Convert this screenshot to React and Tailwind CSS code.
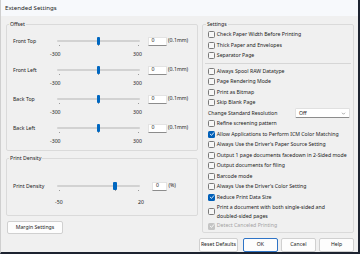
import React from 'react';

const Check = ({ checked = false, disabled = false }) => {
  if (checked) {
    return (
      <span
        className={`flex items-center justify-center w-[7px] h-[7px] shrink-0 rounded-[1.5px] ${
          disabled ? 'bg-[#c4c4c4]' : 'bg-[#005fb8]'
        }`}
      >
        <svg viewBox="0 0 10 10" className="w-[6px] h-[6px]">
          <path d="M2 5.2 L4.2 7.3 L8 2.8" fill="none" stroke="white" strokeWidth="1.4" strokeLinecap="round" strokeLinejoin="round" />
        </svg>
      </span>
    );
  }
  return <span className="block w-[7px] h-[7px] shrink-0 rounded-[1.5px] border border-[#7a7a7a] bg-[#f7f7f7]" />;
};

const Slider = ({ thumb, ticks }) => (
  <div className="relative w-[83px] h-[10px] shrink-0">
    <div className="absolute left-0 right-0 top-[3.5px] h-[2px] rounded-full bg-[#d2d2d2]" />
    <div className="absolute top-[1px] w-[3.5px] h-[7.5px] rounded-[1px] bg-[#0067c0]" style={{ left: thumb - 1.75 }} />
    {ticks.map((t) => (
      <div key={t} className="absolute top-[9px] w-[1px] h-[1px] bg-[#9a9a9a]" style={{ left: t }} />
    ))}
  </div>
);

const NumBox = ({ className }) => (
  <div className={`h-[9px] bg-white border border-[#e3e3e3] border-b-[#8c8c8c] flex items-center pl-[3px] ${className}`}>
    0
  </div>
);

const OffsetRow = ({ label }) => (
  <div className="mb-[5px]">
    <div className="flex items-center h-[10px]">
      <span className="w-[44px] pt-[2px]">{label}</span>
      <Slider thumb={41.3} ticks={[2, 41, 81]} />
      <NumBox className="ml-[7.5px] w-[19px]" />
      <span className="ml-[1.5px]">(0.1mm)</span>
    </div>
    <div className="flex items-center h-[10px] mt-[4px]">
      <span className="ml-[37px] w-[83px]">-300</span>
      <span>300</span>
    </div>
  </div>
);

const settingsTop = [
  { text: 'Check Paper Width Before Printing' },
  { text: 'Thick Paper and Envelopes' },
  { text: 'Separator Page' },
];

const settingsMid = [
  { text: 'Always Spool RAW Datatype' },
  { text: 'Page Rendering Mode' },
  { text: 'Print as Bitmap' },
  { text: 'Skip Blank Page' },
];

const settingsBottom = [
  { text: 'Refine screening pattern' },
  { text: 'Allow Applications to Perform ICM Color Matching', checked: true },
  { text: "Always Use the Driver's Paper Source Setting" },
  { text: 'Output 1 page documents facedown in 2-Sided mode' },
  { text: 'Output documents for filing' },
  { text: 'Barcode mode' },
  { text: "Always Use the Driver's Color Setting" },
  { text: 'Reduce Print Data Size', checked: true },
];

const CheckRow = ({ text, checked }) => (
  <div className="flex items-center h-[10.5px] gap-[1.8px]">
    <Check checked={checked} />
    <span>{text}</span>
  </div>
);

const Button = ({ children, className = '' }) => (
  <button
    type="button"
    className={`h-full flex items-center justify-center rounded-[2px] border bg-[#fdfdfd] ${className}`}
  >
    {children}
  </button>
);

export default function App() {
  return (
    <div className="w-[360px] h-[254px] overflow-hidden whitespace-nowrap bg-[#f0f0f0] border-l border-l-[#cfcfcf] border-r-2 border-b-2 border-r-[#1d2330] border-b-[#1d2330] flex flex-col font-['Noto_Sans',sans-serif] text-[5.2px] leading-none text-[#1b1b1b]">
      {/* Title bar */}
      <div className="h-[16px] shrink-0 flex items-center pl-[4px] bg-[#f7f9fc] text-[6.1px] text-[#202020]">
        Extended Settings
      </div>

      <div className="flex pt-[4px] pl-[5px]">
        {/* Left column */}
        <div className="w-[192px] flex flex-col">
          <fieldset className="h-[131px] border border-[#dadada] rounded-[2px] pt-[8px]">
            <legend className="ml-[2px] px-[1px] h-[8px] leading-[8px]">Offset</legend>
            <div className="pl-[6px]">
              <OffsetRow label="Front Top" />
              <OffsetRow label="Front Left" />
              <OffsetRow label="Back Top" />
              <OffsetRow label="Back Left" />
            </div>
          </fieldset>

          <fieldset className="h-[62px] mt-[3px] border border-[#dadada] rounded-[2px] pt-[19px]">
            <legend className="ml-[2px] px-[1px] h-[8px] leading-[8px]">Print Density</legend>
            <div className="pl-[6px]">
              <div className="flex items-center h-[10px]">
                <span className="w-[44px] pt-[2px]">Print Density</span>
                <Slider thumb={58} ticks={[2, 58, 81]} />
                <NumBox className="ml-[12px] w-[15px]" />
                <span className="ml-[1.5px]">(%)</span>
              </div>
              <div className="flex items-center h-[10px] mt-[7px]">
                <span className="ml-[42px] w-[83px]">-50</span>
                <span>20</span>
              </div>
            </div>
          </fieldset>

          <div className="h-[13px] mt-[5px] ml-[1px]">
            <Button className="w-[56px] border-[#d0d0d0]">Margin Settings</Button>
          </div>
        </div>

        {/* Right column */}
        <div className="w-[152px] ml-[4px] flex flex-col">
          <fieldset className="h-[213px] border border-[#dadada] rounded-[2px] pt-[1.5px] pl-[5px]">
            <legend className="-ml-[2px] px-[1px] h-[8px] leading-[8px]">Settings</legend>
            {settingsTop.map((s) => (
              <CheckRow key={s.text} {...s} />
            ))}
            <div className="h-[1px] bg-[#d6d6d6] mt-[2px] mb-[2px] -ml-[3px] mr-[2px]" />
            {settingsMid.map((s) => (
              <CheckRow key={s.text} {...s} />
            ))}
            <div className="flex items-center h-[10.5px]">
              <span className="w-[87px]">Change Standard Resolution</span>
              <div className="w-[55px] h-[10px] bg-white border border-[#e0e0e0] border-b-[#8c8c8c] rounded-[1.5px] flex items-center justify-between pl-[3px] pr-[3px]">
                <span>Off</span>
                <svg viewBox="0 0 10 10" className="w-[5px] h-[5px]">
                  <path d="M2 3.5 L5 6.5 L8 3.5" fill="none" stroke="#555" strokeWidth="1" />
                </svg>
              </div>
            </div>
            {settingsBottom.map((s) => (
              <CheckRow key={s.text} {...s} />
            ))}
            <div className="flex items-center h-[18.25px] gap-[1.8px]">
              <Check />
              <div className="leading-[8.5px]">
                <div>Print a document with both single-sided and</div>
                <div>doubled-sided pages</div>
              </div>
            </div>
            <div className="flex items-center h-[10.5px] gap-[1.8px] text-[#a3a3a3]">
              <Check checked disabled />
              <span>Detect Canceled Printing</span>
            </div>
          </fieldset>

          <div className="h-[13.5px] mt-[5px] -ml-[3px] flex gap-[3.3px]">
            <Button className="w-[39px] border-[#d0d0d0]">Reset Defaults</Button>
            <Button className="w-[35px] ml-[1.7px] border-[#2f74c6]">OK</Button>
            <Button className="w-[35px] border-[#d0d0d0]">Cancel</Button>
            <Button className="w-[35px] border-[#d0d0d0]">Help</Button>
          </div>
        </div>
      </div>
    </div>
  );
}
